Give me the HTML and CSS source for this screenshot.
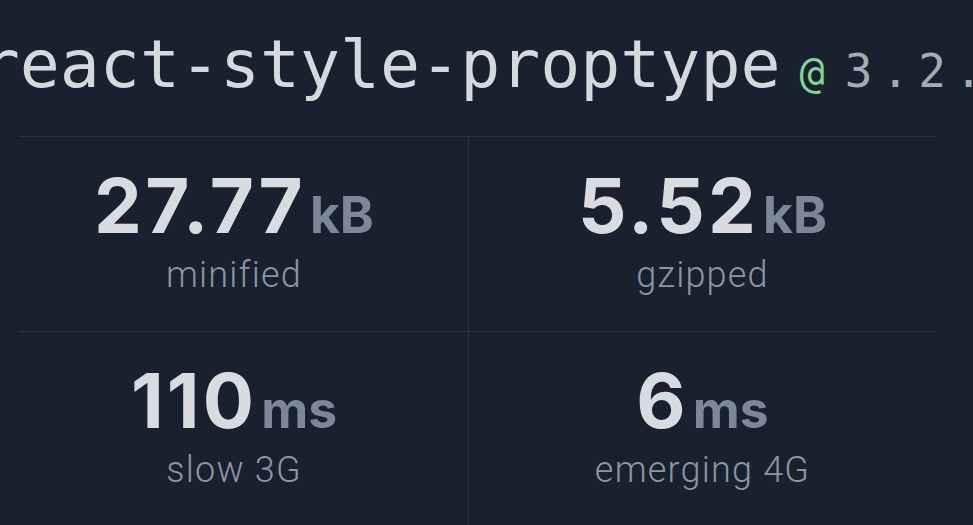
FILE: index.html
```html
<!DOCTYPE html>
<html lang="en">
<head>
<meta charset="utf-8">
<title>react-style-proptype</title>
<link rel="stylesheet" href="styles.css">
</head>
<body>
<main class="result">
  <header class="result-header">
    <h1 class="result-name">
      <span class="name">react-style-proptype</span><span class="at">@</span><span class="version">3.2.2</span>
    </h1>
  </header>
  <section class="stats">
    <div class="stat">
      <div class="stat-value"><span class="num">27.77</span><span class="unit">kB</span></div>
      <div class="stat-label">minified</div>
    </div>
    <div class="stat stat-right">
      <div class="stat-value"><span class="num">5.52</span><span class="unit">kB</span></div>
      <div class="stat-label">gzipped</div>
    </div>
    <div class="stat">
      <div class="stat-value"><span class="num">110</span><span class="unit">ms</span></div>
      <div class="stat-label">slow 3G</div>
    </div>
    <div class="stat stat-right">
      <div class="stat-value"><span class="num">6</span><span class="unit">ms</span></div>
      <div class="stat-label">emerging 4G</div>
    </div>
  </section>
</main>
</body>
</html>
```
FILE: styles.css
```css
html, body {
  margin: 0;
  padding: 0;
  background: #19212e;
  height: 100%;
  overflow: hidden;
}

.result {
  width: 973px;
}

.result-header {
  display: flex;
  justify-content: center;
  padding-top: 31px;
  height: 105px;
  box-sizing: border-box;
}

.result-name {
  margin: 0 0 0 35px;
  display: flex;
  align-items: baseline;
  white-space: nowrap;
  font-family: "DejaVu Sans Mono", "Liberation Mono", monospace;
  font-weight: 400;
  line-height: 1;
}

.name {
  font-size: 66.5px;
  color: #d5d8dd;
}

.at {
  font-size: 42px;
  color: #7fd496;
  margin-left: 19px;
}

.version {
  font-size: 46px;
  color: #a6acb5;
  letter-spacing: 9px;
  margin-left: 20px;
}

.stats {
  display: grid;
  grid-template-columns: 468px 468px;
  margin-top: 31px;
}

.stat {
  height: 195px;
  box-sizing: border-box;
  display: flex;
  flex-direction: column;
  align-items: center;
  padding-top: 31px;
  background: linear-gradient(#29333f, #29333f) 19px 0 / calc(100% - 19px) 1px no-repeat;
}

.stat-right {
  border-left: 1px solid #29333f;
  background: linear-gradient(#29333f, #29333f) 0 0 / 100% 1px no-repeat;
}

.stat-value {
  display: flex;
  align-items: baseline;
  font-family: Inter, "Noto Sans", sans-serif;
  font-weight: 700;
  line-height: 1;
}

.num {
  font-size: 76px;
  color: #d8dbe0;
  letter-spacing: 3.2px;
}

.unit {
  font-size: 51.5px;
  color: #7c8799;
  margin-left: 4px;
}

.stat-label {
  margin-top: 14px;
  font-family: Roboto, "Noto Sans", sans-serif;
  font-weight: 300;
  font-size: 36px;
  letter-spacing: 1.2px;
  line-height: 1;
  color: #8b95a3;
}
```
